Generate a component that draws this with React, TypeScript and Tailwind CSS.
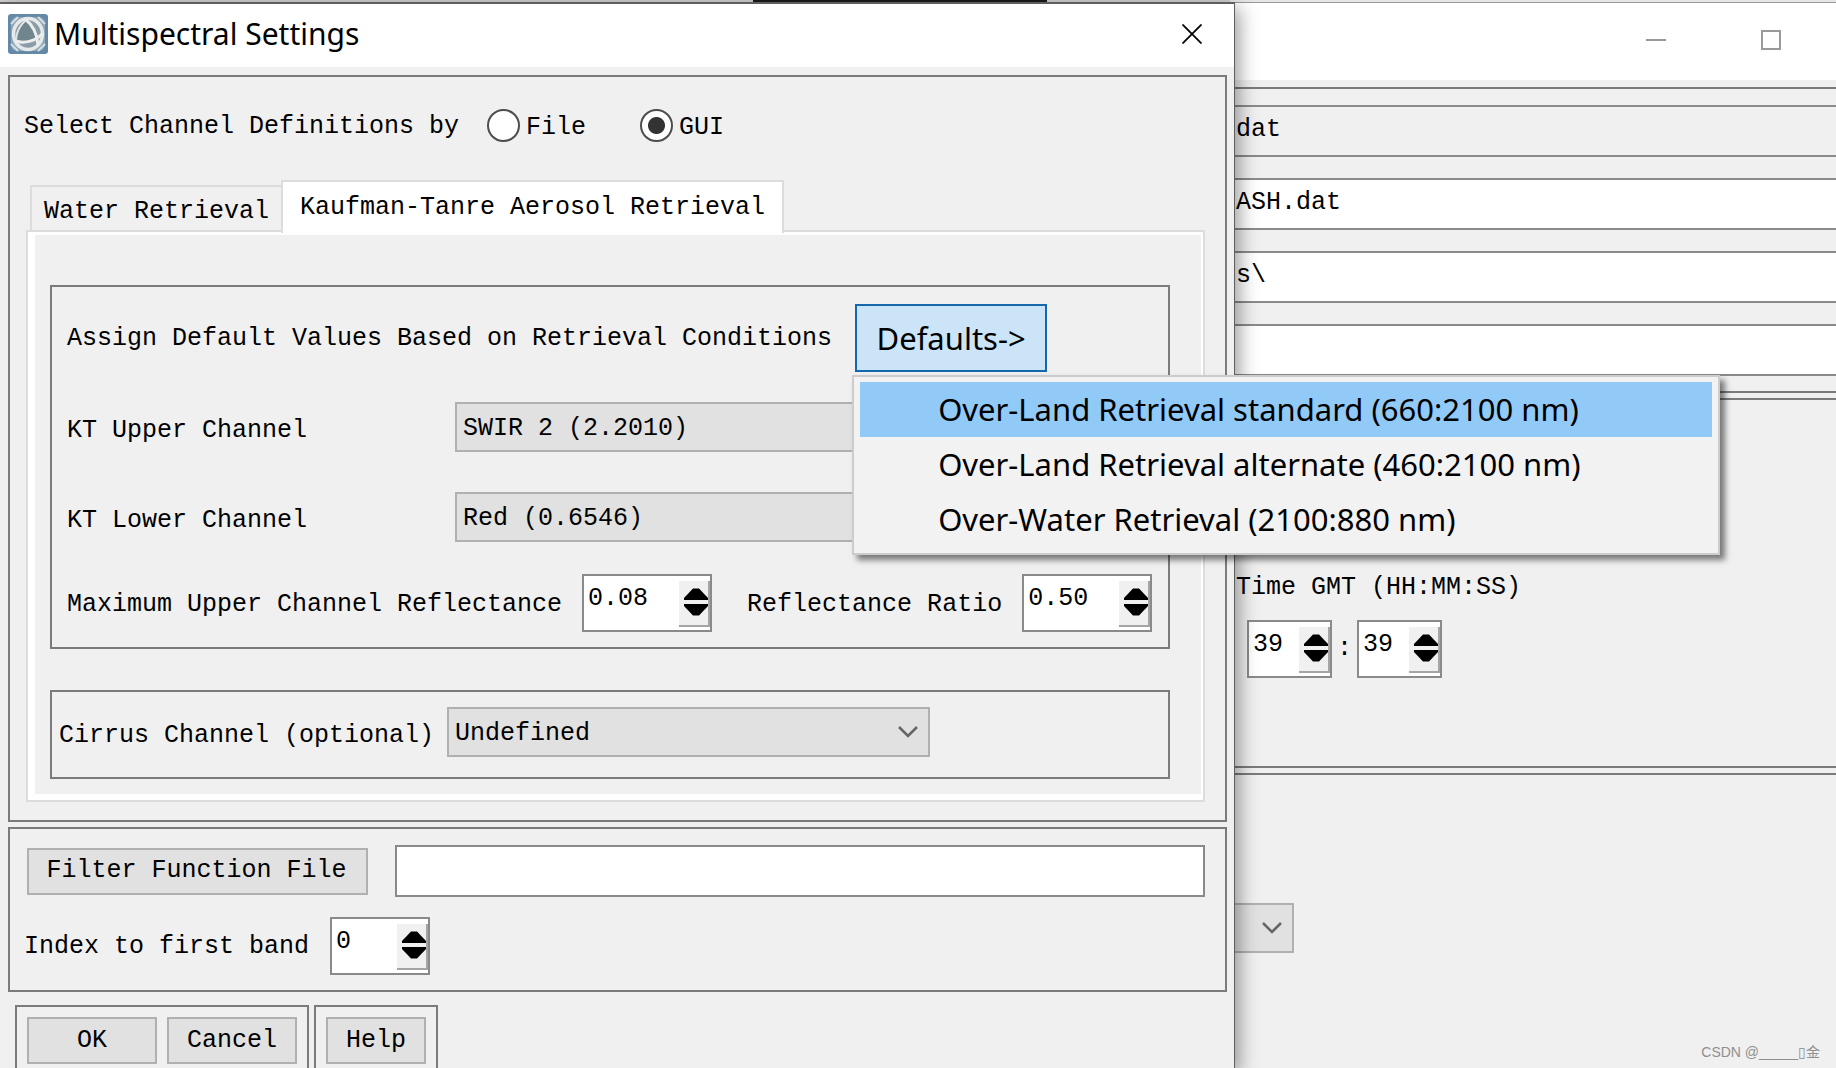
import React, { useState } from "react";

const mono = "font-['Liberation_Mono','Noto_Sans_CJK_SC',monospace] text-[25px] leading-7";
const sans = "font-['Noto_Sans','Open_Sans',sans-serif]";

function Chevron({ className }: { className: string }) {
  return (
    <svg viewBox="0 0 20 13" className={className} fill="none" stroke="#666" strokeWidth="2.6" aria-hidden="true">
      <path d="M1 1.5 L10 10.5 L19 1.5" />
    </svg>
  );
}

function Dropdown({ id, options, className, label }: { id: string; options: string[]; className: string; label?: string }) {
  return (
    <div className={`relative ${className}`}>
      <select
        id={id}
        aria-label={label}
        className="h-full w-full appearance-none border-2 border-[#b0b0b0] bg-[#e1e1e1] pt-1 pl-1.5 text-black outline-none"
      >
        {options.map((o) => (
          <option key={o}>{o}</option>
        ))}
      </select>
      <Chevron className="pointer-events-none absolute top-1/2 right-3 h-[13px] w-5 -translate-y-1/2" />
    </div>
  );
}

function Spinner({ id, value, label, className }: { id: string; value: string; label?: string; className: string }) {
  const digits = value.includes(".") ? 2 : 0;
  const step = digits ? 0.01 : 1;
  const [v, setV] = useState(value);
  const bump = (d: number) => setV((Number(v) + d * step).toFixed(digits));
  return (
    <div className={`flex h-[58px] items-start border-2 border-[#8a8a8a] bg-white ${className}`}>
      <input
        id={id}
        aria-label={label}
        value={v}
        onChange={(e) => setV(e.target.value)}
        className="mt-[9px] h-7 min-w-0 flex-1 bg-transparent pl-1 outline-none"
      />
      <div className="mt-[5px] flex h-[46px] w-[31px] shrink-0 flex-col items-end justify-center gap-1 border-r-2 border-b-2 border-[#a5a5a5] bg-[#f0f0f0] pb-0.5">
        <button type="button" aria-label="Increase" onClick={() => bump(1)}>
          <svg viewBox="0 0 24 12" className="block h-3 w-6" aria-hidden="true">
            <path d="M9 0.5 H15 L24 10 V12 H0 V10 Z" fill="#000" />
          </svg>
        </button>
        <button type="button" aria-label="Decrease" onClick={() => bump(-1)}>
          <svg viewBox="0 0 24 12" className="block h-3 w-6" aria-hidden="true">
            <path d="M9 11.5 H15 L24 2 V0 H0 V2 Z" fill="#000" />
          </svg>
        </button>
      </div>
    </div>
  );
}

function Radio({ id, label, checked, onSelect }: { id: string; label: string; checked: boolean; onSelect: () => void }) {
  return (
    <label htmlFor={id} className="flex items-center gap-1.5">
      <input
        id={id}
        type="radio"
        name="definitions"
        checked={checked}
        onChange={onSelect}
        className="h-[33px] w-[33px] appearance-none rounded-full border-2 border-[#4d4d4d] bg-white bg-clip-padding checked:bg-[radial-gradient(circle,#333_0_8px,#fff_9px)]"
      />
      <span className="pt-1">{label}</span>
    </label>
  );
}

function GlobeIcon() {
  return (
    <svg viewBox="0 0 40 40" className="h-10 w-10 shrink-0" fill="none" aria-hidden="true">
      <rect width="40" height="40" rx="3" fill="#6489a6" />
      <rect x="3" y="3" width="34" height="34" rx="6" fill="#8fa6b6" />
      <path d="M3 10 L10 3 M30 3 L37 10 M37 30 L30 37 M10 37 L3 30" stroke="#d3dee5" strokeWidth="2" />
      <ellipse cx="20" cy="20" rx="14.5" ry="15.5" fill="#8a9ca8" stroke="#e6e9e9" strokeWidth="3.5" />
      <path d="M18 7 C12 12 9 18 9 26 C17 28 24 27 29 24 C27 16 24 11 18 7 Z" fill="#71858f" />
      <path d="M18 6 C11 12 8 19 8 27" stroke="#dfe4e5" strokeWidth="2" />
      <path d="M17 5 C25 11 29 19 30 31" stroke="#eceeed" strokeWidth="3" />
      <path d="M7 27 C17 30 28 27 35 19" stroke="#eceeed" strokeWidth="3" />
    </svg>
  );
}

const menuItems = [
  "Over-Land Retrieval standard (660:2100 nm)",
  "Over-Land Retrieval alternate (460:2100 nm)",
  "Over-Water Retrieval (2100:880 nm)",
];

const greyButton = "h-[47px] border-2 border-[#b0b0b0] bg-[#e1e1e1]";

function SettingsDialog() {
  const [by, setBy] = useState("gui");
  return (
    <section
      aria-label="Multispectral Settings"
      className="relative z-10 mt-0.5 flex min-w-0 flex-col border-t-2 border-r border-[#5f5f5f] bg-[#f0f0f0] shadow-[4px_6px_18px_rgba(0,0,0,0.4)]"
    >
      <header className="flex h-[63px] items-center gap-1.5 bg-white pb-1 pl-2">
        <GlobeIcon />
        <h1 className={`flex-1 text-[30px] leading-10 ${sans}`}>Multispectral Settings</h1>
        <button type="button" aria-label="Close" className="mr-[31px] p-px">
          <svg viewBox="0 0 20 20" className="h-5 w-5" stroke="#000" strokeWidth="1.8" aria-hidden="true">
            <path d="M0.5 0.5 L19.5 19.5 M19.5 0.5 L0.5 19.5" />
          </svg>
        </button>
      </header>

      <div className="flex flex-1 flex-col gap-[5px] pt-2 pr-[7px] pl-2">
        <div className="border-2 border-[#7b7b7b] pt-8 pr-5 pb-[18px] pl-4">
          <div role="radiogroup" aria-labelledby="define-by" className="flex items-center">
            <span id="define-by" className="-ml-0.5 w-[463px] pt-0.5">Select Channel Definitions by</span>
            <div className="flex gap-[54px]">
              <Radio id="by-file" label="File" checked={by === "file"} onSelect={() => setBy("file")} />
              <Radio id="by-gui" label="GUI" checked={by === "gui"} onSelect={() => setBy("gui")} />
            </div>
          </div>

          <div role="tablist" className="mt-[38px] ml-1 flex h-[50px] items-start">
            <button type="button" role="tab" aria-selected="false" className="mt-[5px] h-[47px] border-2 border-r-0 border-[#dcdcdc] px-3 pt-1.5">
              Water Retrieval
            </button>
            <button type="button" role="tab" aria-selected="true" className="relative z-10 h-[53px] border-2 border-b-0 border-[#dcdcdc] bg-white px-[17px]">
              Kaufman-Tanre Aerosol Retrieval
            </button>
          </div>

          <div role="tabpanel" className="border-2 border-[#dcdcdc]">
            <div className="flex flex-col gap-[41px] border-t-[3px] border-r-2 border-b-[6px] border-l-[7px] border-white pt-[50px] pr-[31px] pb-[15px] pl-[15px]">
              <div className="border-2 border-[#7b7b7b] py-[15px] pl-[15px]">
                <div className="mt-0.5 flex items-center gap-[23px]">
                  <span className="pt-0.5">Assign Default Values Based on Retrieval Conditions</span>
                  <div className="relative">
                    <button
                      type="button"
                      aria-haspopup="menu"
                      aria-expanded="true"
                      className={`block h-[68px] w-48 border-2 border-[#1668ae] bg-[#cce4f7] text-[31px] ${sans}`}
                    >
                      Defaults-&gt;
                    </button>
                    <ul
                      role="menu"
                      className={`absolute top-[71px] -left-[3px] z-20 w-[868px] border-2 border-[#cccccc] bg-[#f2f2f2] px-1.5 pt-[5px] pb-[6px] text-[31px] whitespace-nowrap shadow-[5px_5px_6px_rgba(0,0,0,0.5)] ${sans}`}
                    >
                      {menuItems.map((m, i) => (
                        <li key={m} role="none">
                          <button
                            type="button"
                            role="menuitem"
                            className={`block h-[55px] w-full pb-0.5 pl-[78px] text-left ${i === 0 ? "bg-[#91c9f7]" : "bg-transparent"}`}
                          >
                            {m}
                          </button>
                        </li>
                      ))}
                    </ul>
                  </div>
                </div>
                <div className="mt-[30px] flex items-center">
                  <label htmlFor="kt-upper" className="w-[388px] pt-2">KT Upper Channel</label>
                  <Dropdown id="kt-upper" options={["SWIR 2 (2.2010)"]} className="h-[50px] w-[483px]" />
                </div>
                <div className="mt-10 flex items-center">
                  <label htmlFor="kt-lower" className="w-[388px] pt-2">KT Lower Channel</label>
                  <Dropdown id="kt-lower" options={["Red (0.6546)"]} className="h-[50px] w-[483px]" />
                </div>
                <div className="mt-8 flex items-center gap-5">
                  <label htmlFor="max-upper" className="pt-1">Maximum Upper Channel Reflectance</label>
                  <Spinner id="max-upper" value="0.08" className="w-[130px]" />
                  <label htmlFor="ratio" className="ml-[15px] pt-1">Reflectance Ratio</label>
                  <Spinner id="ratio" value="0.50" className="w-[130px]" />
                </div>
              </div>

              <div className="flex items-center gap-[13px] border-2 border-[#7b7b7b] pt-[15px] pb-5 pl-[7px]">
                <label htmlFor="cirrus" className="pt-2">Cirrus Channel (optional)</label>
                <Dropdown id="cirrus" options={["Undefined"]} className="h-[50px] w-[483px]" />
              </div>
            </div>
          </div>
        </div>

        <div className="border-2 border-[#7b7b7b] pt-4 pr-5 pb-[15px] pl-3.5">
          <div className="flex items-center gap-[27px] pl-[3px]">
            <button type="button" className={`w-[341px] pr-0.5 ${greyButton}`}>Filter Function File</button>
            <input aria-label="Filter function file" className="h-[52px] min-w-0 flex-1 border-2 border-[#8a8a8a] bg-white px-2 outline-none" />
          </div>
          <div className="mt-5 flex items-center gap-[21px]">
            <label htmlFor="band" className="pt-0.5">Index to first band</label>
            <Spinner id="band" value="0" className="w-[100px]" />
          </div>
        </div>

        <div className="mt-2 flex flex-1 gap-[5px] pl-[7px]">
          <div className="flex gap-2.5 border-2 border-b-0 border-[#7b7b7b] px-2.5 pt-2.5">
            <button type="button" className={`w-[130px] ${greyButton}`}>OK</button>
            <button type="button" className={`w-[130px] ${greyButton}`}>Cancel</button>
          </div>
          <div className="border-2 border-b-0 border-[#7b7b7b] px-2.5 pt-2.5">
            <button type="button" className={`w-[100px] ${greyButton}`}>Help</button>
          </div>
        </div>
      </div>
    </section>
  );
}

const field = "h-[52px] w-full border-y-2 border-[#8a8a8a] pb-1 pl-px outline-none";

function BackWindow() {
  return (
    <section aria-label="Atmospheric correction" className="mt-0.5 flex min-w-0 flex-col border-t border-[#999] bg-[#f0f0f0]">
      <header className="flex h-[77px] items-center justify-end gap-[95px] bg-white pr-[55px] pb-[3px]">
        <button type="button" aria-label="Minimize">
          <svg viewBox="0 0 20 20" className="h-5 w-5" aria-hidden="true">
            <path d="M0 10 H20" stroke="#999" strokeWidth="2" />
          </svg>
        </button>
        <button type="button" aria-label="Maximize">
          <svg viewBox="0 0 20 20" className="h-5 w-5" aria-hidden="true">
            <path d="M1 1 H19 V19 H1 Z" stroke="#999" strokeWidth="2" fill="none" />
          </svg>
        </button>
      </header>

      <div className="mt-[7px] flex flex-col gap-[21px] border-y-2 border-[#7b7b7b] pt-4 pb-[15px]">
        <input aria-label="Input file" defaultValue="dat" className={`bg-[#f0f0f0] ${field}`} />
        <input aria-label="Output file" defaultValue="ASH.dat" className={`bg-white ${field}`} />
        <input aria-label="Output directory" defaultValue="s\" className={`bg-white ${field}`} />
        <input aria-label="Rootname" className={`bg-white ${field}`} />
      </div>

      <div className="mt-[5px] border-y-2 border-[#7b7b7b] pt-[174px] pb-[88px]">
        <p className="pl-px">Time GMT (HH:MM:SS)</p>
        <div className="mt-[18px] ml-3 flex items-center gap-[5px]">
          <Spinner id="minutes" label="Minutes" value="39" className="w-[85px]" />
          <span>:</span>
          <Spinner id="seconds" label="Seconds" value="39" className="w-[85px]" />
        </div>
      </div>

      <div className="mt-[5px] flex-1 border-t-2 border-[#7b7b7b] pt-32">
        <div className="w-[59px] overflow-hidden">
          <Dropdown id="model" label="Aerosol model" options={[""]} className="-ml-2 h-[50px] w-[67px]" />
        </div>
      </div>
    </section>
  );
}

export default function App() {
  return (
    <main className={`relative grid min-h-screen grid-cols-[1235fr_601fr] overflow-hidden bg-[linear-gradient(to_right,#cfcfcf_41%,#1a1a1a_41%,#1a1a1a_57%,#cfcfcf_57%,#cfcfcf_67%,#e6e6e6_67%)] text-black ${mono}`}>
      <SettingsDialog />
      <BackWindow />
      <p className="absolute right-4 bottom-1.5 font-['Liberation_Sans','Noto_Sans_CJK_SC',sans-serif] text-sm text-[#8f8f8f]">
        CSDN @_____▯金
      </p>
    </main>
  );
}
